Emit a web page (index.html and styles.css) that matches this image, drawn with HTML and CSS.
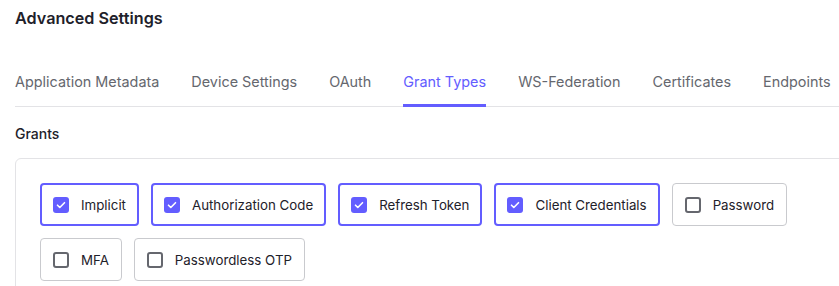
FILE: index.html
```html
<!DOCTYPE html>
<html lang="en">
<head>
<meta charset="utf-8">
<title>Advanced Settings</title>
<link rel="stylesheet" href="styles.css">
</head>
<body>
<div class="page">
  <h2 class="title">Advanced Settings</h2>
  <nav class="tabs">
    <span class="tab">Application Metadata</span>
    <span class="tab">Device Settings</span>
    <span class="tab">OAuth</span>
    <span class="tab active">Grant Types</span>
    <span class="tab">WS-Federation</span>
    <span class="tab">Certificates</span>
    <span class="tab">Endpoints</span>
  </nav>
  <h3 class="section-label">Grants</h3>
  <div class="card">
    <div class="chips">
      <label class="chip checked"><span class="box"><svg viewBox="0 0 16 16" width="16" height="16"><path d="M4.5 8.2l2.3 2.3 4.7-4.8" fill="none" stroke="#fff" stroke-width="1.6" stroke-linecap="round" stroke-linejoin="round"/></svg></span>Implicit</label>
      <label class="chip checked"><span class="box"><svg viewBox="0 0 16 16" width="16" height="16"><path d="M4.5 8.2l2.3 2.3 4.7-4.8" fill="none" stroke="#fff" stroke-width="1.6" stroke-linecap="round" stroke-linejoin="round"/></svg></span>Authorization Code</label>
      <label class="chip checked"><span class="box"><svg viewBox="0 0 16 16" width="16" height="16"><path d="M4.5 8.2l2.3 2.3 4.7-4.8" fill="none" stroke="#fff" stroke-width="1.6" stroke-linecap="round" stroke-linejoin="round"/></svg></span>Refresh Token</label>
      <label class="chip checked"><span class="box"><svg viewBox="0 0 16 16" width="16" height="16"><path d="M4.5 8.2l2.3 2.3 4.7-4.8" fill="none" stroke="#fff" stroke-width="1.6" stroke-linecap="round" stroke-linejoin="round"/></svg></span>Client Credentials</label>
      <label class="chip"><span class="box"></span>Password</label>
      <label class="chip"><span class="box"></span>MFA</label>
      <label class="chip"><span class="box"></span>Passwordless OTP</label>
    </div>
  </div>
</div>
</body>
</html>
```

FILE: styles.css
```css
* { box-sizing: border-box; }
html, body { margin: 0; padding: 0; background: #fff; }
body {
  font-family: Inter, "Noto Sans", sans-serif;
  color: #1e212a;
  overflow: hidden;
}
.page {
  padding: 0 0 0 15px;
  width: 880px;
}
.title {
  margin: 0;
  padding-top: 8px;
  font-size: 16.2px;
  font-weight: 600;
  line-height: 20px;
  color: #1e212a;
}
.tabs {
  display: flex;
  gap: 32px;
  margin-top: 44px;
  border-bottom: 1px solid #e3e3e6;
  width: 840px;
}
.tab {
  font-size: 14.4px;
  line-height: 20px;
  color: #65676e;
  padding: 0 0 14px;
  position: relative;
  white-space: nowrap;
}
.tab.active {
  color: #635dff;
}
.tab.active::after {
  content: "";
  position: absolute;
  left: 0;
  right: 0;
  bottom: -1px;
  height: 3px;
  background: #635dff;
}
.section-label {
  margin: 17px 0 0;
  font-size: 14px;
  font-weight: 500;
  line-height: 20px;
  color: #1e212a;
}
.card {
  margin-top: 14px;
  border: 1px solid #e3e3e6;
  border-radius: 6px;
  padding: 24px;
  width: 860px;
}
.chips {
  display: flex;
  flex-wrap: wrap;
  gap: 12px;
  width: 780px;
}
.chip {
  display: flex;
  align-items: center;
  gap: 12px;
  height: 43px;
  padding: 0 12px;
  border: 1px solid #c9cace;
  border-radius: 4px;
  font-size: 13.3px;
  line-height: 20px;
  color: #1e212a;
  white-space: nowrap;
}
.chip.checked {
  border: 2px solid #635dff;
  padding: 0 11px;
}
.box {
  width: 16px;
  height: 16px;
  border: 2px solid #65676e;
  border-radius: 3px;
  flex: none;
  display: block;
}
.chip.checked .box {
  border: none;
  background: #635dff;
}
.box svg { display: block; }
```
